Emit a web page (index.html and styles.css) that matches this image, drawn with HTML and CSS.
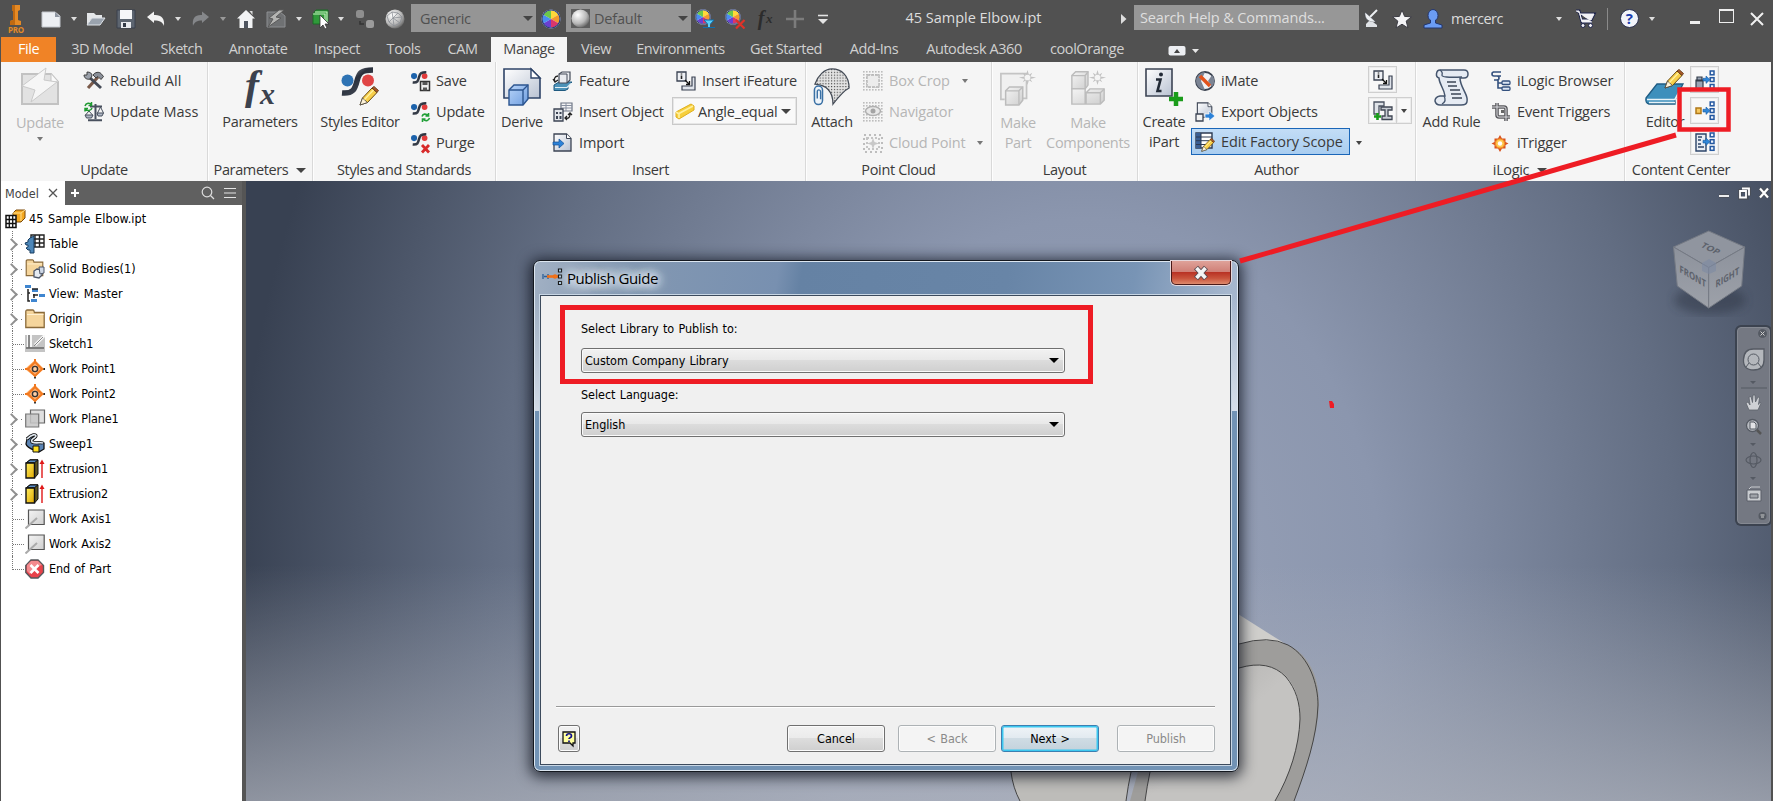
FILE: index.html
```html
<!DOCTYPE html>
<html lang="en">
<head>
<meta charset="utf-8">
<title>45 Sample Elbow.ipt</title>
<link rel="stylesheet" href="styles.css">
</head>
<body>
<svg class="defs" width="0" height="0">
  <defs>
    <linearGradient id="gS" x1="0" y1="0" x2="1" y2="1"><stop offset="0" stop-color="#9aa2ac"/><stop offset=".4" stop-color="#2a303c"/><stop offset="1" stop-color="#4a525e"/></linearGradient>
    <linearGradient id="gPage" x1="0" y1="0" x2="1" y2="1"><stop offset="0" stop-color="#fff"/><stop offset="1" stop-color="#b9c2d2"/></linearGradient>
    <linearGradient id="gGrey" x1="0" y1="0" x2="1" y2="1"><stop offset="0" stop-color="#f4f4f4"/><stop offset="1" stop-color="#cfcfcf"/></linearGradient>
    <linearGradient id="gYel" x1="0" y1="0" x2="1" y2="1"><stop offset="0" stop-color="#ffee60"/><stop offset="1" stop-color="#e0a800"/></linearGradient>
    <linearGradient id="gBlue" x1="0" y1="0" x2="1" y2="1"><stop offset="0" stop-color="#b8d4f8"/><stop offset="1" stop-color="#6f9ee0"/></linearGradient>
    <radialGradient id="gBall" cx=".35" cy=".3" r=".8"><stop offset="0" stop-color="#fff"/><stop offset=".6" stop-color="#b8b8b8"/><stop offset="1" stop-color="#555"/></radialGradient>
    <pattern id="pDots" width="3" height="3" patternUnits="userSpaceOnUse"><rect width="3" height="3" fill="#e4e4e4"/><rect x="1" y="1" width="1.2" height="1.2" fill="#444"/></pattern>
    <pattern id="pDotG" width="3" height="3" patternUnits="userSpaceOnUse"><rect width="1.6" height="1.6" fill="#bdbdbd"/></pattern>
  </defs>
  <symbol id="wheel" viewBox="0 0 20 20">
    <circle cx="10" cy="10" r="9.6" fill="#e8e8f4"/>
    <path d="M10 10V1.5A8.5 8.5 0 0 1 17.4 5.8z" fill="#ffd83a"/><path d="M10 10L17.4 5.8A8.5 8.5 0 0 1 17.4 14.2z" fill="#f39a2c"/><path d="M10 10L17.4 14.2A8.5 8.5 0 0 1 10 18.5z" fill="#d8376c"/><path d="M10 10V18.5A8.5 8.5 0 0 1 2.6 14.2z" fill="#6a3fd0"/><path d="M10 10L2.6 14.2A8.5 8.5 0 0 1 2.6 5.8z" fill="#4a8df0"/><path d="M10 10L2.6 5.8A8.5 8.5 0 0 1 10 1.5z" fill="#6cc84a"/>
    <circle cx="10" cy="10" r="9" fill="none" stroke="#2b3f78" stroke-width="1.2"/>
  </symbol>
  <symbol id="styleS" viewBox="0 0 20 20">
    <circle cx="3.6" cy="6" r="3.6" fill="#1c62ab"/><circle cx="16" cy="6" r="3.4" fill="#e23b3b"/>
    <path d="M2 13.5c6 .6 6.500-2 7.500-6.500S12 1.500 18 1.500" fill="none" stroke="url(#gS)" stroke-width="3"/>
  </symbol>
  <symbol id="pencil" viewBox="0 0 20 20">
    <path d="M1 19l2.500-7L13 2l5 4.500L8.500 16.500z" fill="#f8cf4a" stroke="#6a4a10" stroke-width="1"/><path d="M1 19l2.500-7 5 4.500z" fill="#fff3d8" stroke="#444" stroke-width=".8"/><path d="M13 2l2-1.600L19.500 4.500 18 6.500z" fill="#a85a28" stroke="#5a3010" stroke-width=".8"/><path d="M5.500 13.500L14.500 4" stroke="#fff2a0" stroke-width="1.300"/>
  </symbol>
  <symbol id="targets" viewBox="0 0 20 20">
    <g fill="#eef4fc" stroke="#2458a0" stroke-width="1.500"><rect x="15.200" y="1" width="3.800" height="3.800"/><rect x="15.200" y="7.700" width="3.800" height="3.800"/><rect x="15.200" y="14.500" width="3.800" height="3.800"/></g>
    <path d="M8 8.300h3V6l4 3.700-4 3.700v-2.400H8z" fill="#2f86d8" stroke="#1a5aa0" stroke-width=".6"/>
  </symbol>
  <symbol id="workpt" viewBox="0 0 20 20">
    <path d="M10 0v5M10 15v4.500M15 10h5" stroke="#222" stroke-width="1.800"/><path d="M0 10l10-9 9 9-9 8z" fill="#ffa75a"/><path d="M10 3l7 7-7 7-7-7z" fill="#ffb070" stroke="#f07820" stroke-width="1.800"/><path d="M0 10h3M10 0v3" stroke="#f07820" stroke-width="2"/><circle cx="10" cy="10" r="2.600" fill="#ffd0a8" stroke="#333" stroke-width="1.400"/>
  </symbol>
  <symbol id="folder" viewBox="0 0 20 20"><path d="M.8 18.500V2.500Q.8 1 2.300 1H8q1 0 1.400 2.500h9.800v15z" fill="#f5d59c" stroke="#8a6a3a" stroke-width="1.300"/><path d="M2 5.500h16.500" stroke="#fff0d0"/></symbol>
  <symbol id="extrude" viewBox="0 0 20 20"><path d="M1 4L5 .8h8V15l-3.500 4z" fill="#5c5420" stroke="#111"/><path d="M1 4h8.500v15H1z" fill="url(#gYel)" stroke="#111" stroke-width="1.400"/><path d="M1.500 3.600L5 1h8l-3.500 2.600z" fill="#5a8ec8" stroke="#111"/><path d="M17 19V3" stroke="#e01818" stroke-width="1.400"/><path d="M14.500 5L17 .5 19.500 5z" fill="#e01818"/></symbol>
  <symbol id="axis" viewBox="0 0 20 20"><path d="M3.500 1h15.700v14.500H3.500z" fill="url(#gGrey)" stroke="#555" stroke-width="1.200"/><path d="M.5 19.500L12 9" stroke="#aaa" stroke-width="2"/></symbol>
  <symbol id="page" viewBox="0 0 20 20"><path d="M1 1h12.500L18 5.500V18H1z" fill="url(#gPage)" stroke="#3c4454" stroke-width="1.300"/><path d="M13.500 1v4.500H18" fill="#fff" stroke="#3c4454"/></symbol>
  <symbol id="ifeat" viewBox="0 0 20 20"><path d="M1 1h9v9H1z" fill="#eef0f4" stroke="#3a4252" stroke-width="1.300"/><path d="M5.500 4.500V8M5.500 2.600v1" stroke="#222" stroke-width="1.600"/><path d="M16 6h3v13H6v-4h10z" fill="#dfe3ea" stroke="#3a4252" stroke-width="1.200"/><path d="M9 9l4.500 4.500M13.500 10v3.500H10" stroke="#111" stroke-width="1.300" fill="none"/></symbol>
</svg>

<div class="app">
  <header class="titlebar">
    <span class="slot"><svg width="18" height="30"><path d="M5 1h8v5l-2 1v9l3 1v4H3v-4l3-1V7L5 6z" fill="#e58a25"/><path d="M5 1h3v20H3v-4l3-1V7L5 6z" fill="#c06a12"/><text x="9" y="28.500" text-anchor="middle" class="pro">PRO</text></svg></span>
    <span class="slot"><svg width="20" height="18"><path d="M1 2h13l5 4v11H1z" fill="#eceff3" stroke="#c2c6cc"/><path d="M14 2v5h5" fill="#8c94a0"/></svg></span>
    <span class="slot"><i class="caret light"></i></span>
    <span class="slot"><svg width="20" height="16"><path d="M1 2h7l2 2h6v3H6L1 14z" fill="#e4e6e8"/><path d="M6 7h13l-5 7H1z" fill="#9aa3ae" stroke="#dfe3e8"/></svg></span>
    <span class="slot"><svg width="20" height="20"><path d="M1 1h18v18H1z" fill="#5d6570" stroke="#3b414c"/><path d="M4 1h12v9H4z" fill="#f6f6f8"/><path d="M5 13h10v6H5z" fill="#e8eaee"/><path d="M7 14h3v4H7z" fill="#333a46"/></svg></span>
    <span class="slot"><svg width="20" height="16"><path d="M1 6l7-5.500v3.500c7-.5 11 3 10 11-1.500-4-4-5.500-10-5.500V12z" fill="#f2f2f2"/></svg></span>
    <span class="slot"><i class="caret light"></i></span>
    <span class="slot"><svg width="20" height="16"><path d="M18 6l-7-5.500v3.500C4 3.500 1 7 2 15c1.500-4 4-5.500 9-5.500V12z" fill="#85878a"/></svg></span>
    <span class="slot"><i class="caret dim"></i></span>
    <span class="slot"><svg width="20" height="20"><path d="M10 1l9 8.500h-2.500V19H3.500V9.500H1z" fill="#f2f3f4"/><path d="M8 12h4v7H8z" fill="#4e545e"/><path d="M13.500 2h3v4z" fill="#ddd"/></svg></span>
    <span class="slot"><svg width="20" height="20"><path d="M1 3h13l5 4v11H1z" fill="#6f7173" stroke="#8d8f92"/><path d="M13 1L3 9l4 1-5 8 13-9-5-1 8-7z" fill="#b4b4b2" stroke="#5a5a5a"/></svg></span>
    <span class="slot"><i class="caret light"></i></span>
    <span class="slot"><svg width="20" height="22"><path d="M2 6l3-4h12v11l-3 3H2z" fill="#2f9a3a" stroke="#1d6a26"/><path d="M4 4h12v10M2 6h12v10" fill="none" stroke="#c4f0bc" stroke-width="1.200"/><path d="M9 7v13l3-3 2 4 2-1-2-4h4z" fill="#fff" stroke="#333" stroke-width=".8"/></svg></span>
    <span class="slot"><i class="caret light"></i></span>
    <span class="slot"><svg width="20" height="20"><rect x="1" y="1" width="8" height="8" rx="2.500" fill="#8e8e8e"/><rect x="11" y="11" width="8" height="8" rx="2.500" fill="#9b9b9b"/><path d="M5 12v3h4" stroke="#333" stroke-width="1.500" fill="none"/></svg></span>
    <span class="slot"><svg width="20" height="20"><circle cx="10" cy="10" r="9.500" fill="url(#gBall)"/><path d="M2 7l5-4 6 1 4 4-2 6-6 3-5-4zM7 3l1 6 7 5M13 4l-5 5-4 4M17 8l-9 1 1 8" fill="none" stroke="#8b8f96" stroke-width=".8"/></svg></span>
    <span class="combo"><span class="combo-text">Generic</span><i class="caret mid"></i></span>
    <span class="slot"><svg width="20" height="20"><use href="#wheel"/></svg></span>
    <span class="combo"><svg width="19" height="19"><rect width="19" height="19" fill="#5d5d5d"/><circle cx="9.500" cy="9.500" r="9" fill="url(#gBall)"/></svg><span class="combo-text">Default</span><i class="caret mid"></i></span>
    <span class="slot"><svg width="20" height="20"><use href="#wheel" width="16" height="16"/><path d="M9 11h10l-4 4.500h-2zM8 18.500h12" fill="#5cd0f8" stroke="#0e70b0"/><path d="M14 15v3" stroke="#5cd0f8" stroke-width="2"/></svg></span>
    <span class="slot"><svg width="20" height="20"><use href="#wheel" width="16" height="16"/><path d="M11 11l8.500 8.500M19.500 11L11 19.500" stroke="#e03228" stroke-width="2.200"/></svg></span>
    <span class="slot fx-small">f<sub>x</sub></span>
    <span class="slot"><svg width="18" height="18"><path d="M9 0v18M0 9h18" stroke="#7c7c7c" stroke-width="2.600"/></svg></span>
    <span class="slot"><svg width="12" height="12"><path d="M1 2.500h10" stroke="#e4e4e4" stroke-width="1.600"/><path d="M1 6h10l-5 5z" fill="#e4e4e4"/></svg></span>
    <span class="doc-title">45 Sample Elbow.ipt</span>
    <span class="slot"><svg width="6" height="10"><path d="M0 0l5.500 5L0 10z" fill="#ddd"/></svg></span>
    <span class="search">Search Help &amp; Commands...</span>
    <span class="slot"><svg width="18" height="20"><path d="M2 3c-1 7 4 11 11 10z" fill="#eceff2" stroke="#3c4048" stroke-width=".6"/><path d="M7 8l7-7" stroke="#eceff2" stroke-width="2"/><path d="M6 12l-3 3v3h11v-2l-4-3z" fill="#dfe2e6"/></svg></span>
    <span class="slot"><svg width="20" height="20"><path d="M10 1l2.600 6.400 6.900.4-5.300 4.300L16 19l-6-3.800L4 19l1.800-6.900L.5 7.800l6.900-.4z" fill="#f4f4f6" stroke="#3c3c44"/></svg></span>
    <span class="slot"><svg width="20" height="20"><ellipse cx="10" cy="6.500" rx="5" ry="6" fill="#6b9cf4" stroke="#23366e"/><path d="M7.500 11h5v3l6.500 2v3H1v-3l6.500-2z" fill="#6b9cf4" stroke="#23366e"/><path d="M8 10h4v5H8z" fill="#6b9cf4"/></svg></span>
    <span class="user-name">mercerc</span>
    <span class="slot"><i class="caret light"></i></span>
    <span class="slot"><svg width="20" height="20"><path d="M1 2h3l3 11h10M5 5h14l-3 6H6.500z" fill="#f2f2f6" stroke="#20264e" stroke-width="3"/><path d="M1 2h3l3 11h10M5 5h14l-3 6H6.500z" fill="#f2f2f6" stroke="#f2f2f6" stroke-width="1"/><circle cx="8" cy="16.500" r="2" fill="#f2f2f6" stroke="#20264e"/><circle cx="15.500" cy="16.500" r="2" fill="#f2f2f6" stroke="#20264e"/></svg></span>
    <span class="slot"><i class="vline"></i></span>
    <span class="slot"><i class="help-ball">?</i></span>
    <span class="slot"><i class="caret light"></i></span>
    <span></span>
    <span class="slot"><i class="win-min"></i></span>
    <span class="slot"><i class="win-max"></i></span>
    <span class="slot"><svg width="14" height="14"><path d="M1 1l12 12M13 1L1 13" stroke="#f0f0f0" stroke-width="2"/></svg></span>
  </header>

  <nav class="tabs">
    <span class="tab tab-file">File</span><span class="tab w92">3D Model</span><span class="tab w68">Sketch</span><span class="tab w86">Annotate</span><span class="tab w72">Inspect</span><span class="tab w61">Tools</span><span class="tab w56">CAM</span><span class="tab tab-on">Manage</span><span class="tab w58">View</span><span class="tab w112">Environments</span><span class="tab w100">Get Started</span><span class="tab w77">Add-Ins</span><span class="tab w124">Autodesk A360</span><span class="tab w103">coolOrange</span>
    <svg class="tab-fold" width="34" height="12"><rect x=".5" y="1" width="17" height="9.500" rx="2" fill="#eceef2"/><path d="M6 8l3-4 3 4z" fill="#444"/><path d="M24 4h7l-3.500 4z" fill="#e8e8e8"/></svg>
  </nav>

  <section class="ribbon">
    <div class="panel p-update">
      <div class="body">
        <div class="big off"><svg width="38" height="38" viewBox="0 0 38 38"><path d="M1 6h29l7 8v22H1z" fill="#e2e2e2" stroke="#c2c2c2" stroke-width="2"/><path d="M30 6v8h7" fill="#fafafa" stroke="#c2c2c2"/><path d="M25 0L1 18l13 4-4 12 26-20-13-2z" fill="#f6f6f6" stroke="#cacaca"/></svg><span>Update</span><i class="caret grey"></i></div>
        <div class="col">
          <div class="row"><svg width="20" height="20" viewBox="0 0 20 20"><path d="M4 17L14 6" stroke="#7a5a4a" stroke-width="3.200"/><path d="M5 6l12 11" stroke="#454b56" stroke-width="3"/><path d="M9 4c2-3 6-3.500 8-1.500l2.500 3-2.500 3-3-3-2 1.500z" fill="#8a8f98" stroke="#333" stroke-width=".9"/><path d="M3 1v3H0c0 3 3 5 6 4l2-3c0-3-2-4-5-4z" fill="#9aa0aa" stroke="#333" stroke-width=".9"/></svg><span>Rebuild All</span></div>
          <div class="row"><svg width="20" height="20" viewBox="0 0 20 20"><path d="M11.500 2v15M4 18.300h14M6 4.500h12" stroke="#48505e" stroke-width="2"/><path d="M1 13h8l-1.500 3h-5zM13 11h6.500l-1.500 3h-4z" fill="#aeb6c4" stroke="#48505e"/><path d="M16.500 5l-3 6M16.500 5l3 6M5 9l-3.500 4M5 9l3.500 4" stroke="#48505e"/><path d="M1 4c1-3.500 5-3.500 6-1.500M7.500 0v3.500h-3M8 6c-1 3-5 3.500-6.500 1M1 9.500V6.500h3" fill="none" stroke="#1f9a32" stroke-width="1.500"/></svg><span>Update Mass</span></div>
        </div>
      </div>
      <div class="cap">Update</div>
    </div>
    <div class="panel p-param">
      <div class="body"><div class="big"><span class="fx-big">f<sub>x</sub></span><span>Parameters</span></div></div>
      <div class="cap">Parameters<i class="caret mid"></i></div>
    </div>
    <div class="panel p-styles">
      <div class="body">
        <div class="big"><svg width="38" height="38" viewBox="0 0 38 38"><circle cx="6.500" cy="12.500" r="6" fill="#2e73b4"/><circle cx="27" cy="12.500" r="6" fill="#e04545"/><path d="M1 25c11 1 13-4 15-12S20 2 32 2" fill="none" stroke="url(#gS)" stroke-width="5.500"/><use href="#pencil" x="18" y="18" width="20" height="20"/></svg><span>Styles Editor</span></div>
        <div class="col">
          <div class="row"><svg width="20" height="20"><use href="#styleS" width="19" height="17"/><path d="M10.500 10.500h9v9h-9z" fill="#eee" stroke="#333" stroke-width="1.500"/><path d="M12.500 11h5v3h-5zM13 16.500h4v3h-4z" fill="#555"/></svg><span>Save</span></div>
          <div class="row"><svg width="20" height="20"><use href="#styleS" width="19" height="17"/><path d="M12 14.500c1-3 4-3 6-1M18.500 11v3h-3M19.500 16c-1 3-4 3.500-6 1.500M12.500 20v-3h3" fill="none" stroke="#22a038" stroke-width="1.600"/></svg><span>Update</span></div>
          <div class="row"><svg width="20" height="20"><use href="#styleS" width="19" height="17"/><path d="M12 12l7 7.500M19 12l-7 7.500" stroke="#d82a2a" stroke-width="2.800"/></svg><span>Purge</span></div>
        </div>
      </div>
      <div class="cap">Styles and Standards</div>
    </div>
    <div class="panel p-insert">
      <div class="body">
        <div class="big"><svg width="38" height="38" viewBox="0 0 38 38"><path d="M1 1h27l9 9v20H1z" fill="url(#gPage)" stroke="#2f4468" stroke-width="1.600"/><path d="M28 1v9h9z" fill="#fff" stroke="#2f4468" stroke-width="1.400"/><path d="M6 22l5-5h14v14l-5 6H6z" fill="url(#gBlue)" stroke="#2c5590" stroke-width="1.400"/><path d="M6 22h14v15M20 22l5-5" fill="none" stroke="#2c5590" stroke-width="1.400"/></svg><span>Derive</span></div>
        <div class="col c-insert">
          <div class="row"><svg width="20" height="20" viewBox="0 0 20 20"><path d="M1 14l5-3h13l-4 4v3l-3 1.500H1z" fill="#4c92b8" stroke="#1f5a80"/><path d="M2 16.500h12l4-4" fill="none" stroke="#e4f0f6" stroke-width="1.200"/><path d="M6 3l3-2h8v8l-3 3H6z" fill="#e9ebef" stroke="#444b58" stroke-width="1.200"/><path d="M6 3h8v9" fill="none" stroke="#444b58"/><path d="M5 5c-4 0-4 4-3 5M0 8l2 3 3-2" fill="none" stroke="#222" stroke-width="1.300"/></svg><span>Feature</span></div>
          <div class="row"><svg width="20" height="20" viewBox="0 0 20 20"><path d="M8 1h11v8H8z" fill="#f4f4f6" stroke="#6d7584" stroke-width="1.200"/><path d="M8 3.500h11M13 1v8M8 6h11" stroke="#8890a0"/><path d="M1 7h9v12H1z" fill="#e3e6ea" stroke="#3c4454" stroke-width="1.300"/><path d="M3 10h2v2H3zM6.500 10h2v2h-2zM3 14h2v3H3zM6.500 14h2v3h-2z" fill="#3c4454"/><path d="M12 16c4 1 5-1 5-4M14 14l-2 2 2 2M15 13l2-2 2 2" fill="none" stroke="#222" stroke-width="1.300"/></svg><span>Insert Object</span></div>
          <div class="row"><svg width="20" height="20"><use href="#page" width="20" height="20"/><path d="M0 9h6V6l5 4.500L6 15v-3H0z" fill="#2c82d8" stroke="#145096" stroke-width=".7"/></svg><span>Import</span></div>
        </div>
        <div class="col">
          <div class="row inset"><svg width="20" height="20"><use href="#ifeat"/></svg><span>Insert iFeature</span></div>
          <div class="pick"><svg width="20" height="18" viewBox="0 0 20 18"><path d="M1 10L16 2l3 2v4L4 17l-3-2z" fill="#f6cf3c" stroke="#e0b020"/><path d="M3 12L18 4M1 10l3 2v4" stroke="#fff0a0" stroke-width="1.600" fill="none"/></svg><span>Angle_equal</span><i class="caret mid"></i></div>
        </div>
      </div>
      <div class="cap">Insert</div>
    </div>
    <div class="panel p-cloud">
      <div class="body">
        <div class="big"><svg width="40" height="40" viewBox="0 0 40 40"><path d="M2 17C5 8 12 1 20 1c10 0 18 7 18 20-6 3-10 8-17 17 0-12-6-20-19-21z" fill="url(#pDots)" stroke="#444b56" stroke-width="1.300"/><rect x="1.500" y="19" width="8.500" height="19.500" rx="4.200" fill="#eef4fa" stroke="#3a70a4" stroke-width="1.600"/><path d="M4.500 32V25q0-2 1.700-2T8 25v8" fill="none" stroke="#3a70a4" stroke-width="1.500"/></svg><span>Attach</span></div>
        <div class="col off">
          <div class="row"><svg width="20" height="20"><rect width="20" height="20" fill="url(#pDotG)"/><path d="M4 4h12v12H4z" fill="#ececec" stroke="#b4b4b4" stroke-width="1.300" stroke-dasharray="3 1"/></svg><span>Box Crop</span><i class="caret cc"></i></div>
          <div class="row"><svg width="20" height="20"><rect width="20" height="20" fill="url(#pDotG)"/><ellipse cx="10" cy="9" rx="7.500" ry="4.500" fill="#e8e8e8" stroke="#b0b0b0" stroke-width="1.500"/><circle cx="10" cy="9" r="2.500" fill="#a4a4a4"/></svg><span>Navigator</span></div>
          <div class="row"><svg width="20" height="20"><path d="M1 2h18v17H1z" fill="none" stroke="#bdbdbd" stroke-width="2" stroke-dasharray="2 3"/><path d="M4 5h12v11H4z" fill="none" stroke="#c4c4c4" stroke-width="2" stroke-dasharray="2 2"/><path d="M10 5l1.500 4L16 10.500 11.500 12 10 16l-1.500-4L4 10.500 8.500 9z" fill="#c8c8c8"/></svg><span>Cloud Point</span><i class="caret cc"></i></div>
        </div>
      </div>
      <div class="cap">Point Cloud</div>
    </div>
    <div class="panel p-layout">
      <div class="body">
        <div class="big off"><svg width="38" height="40" viewBox="0 0 38 40"><path d="M5 33H1V6h27v26h-5" fill="#f0f0f0" stroke="#c4c4c4" stroke-width="1.800"/><path d="M6 24l4-4h14v14l-4 5H6z" fill="url(#gGrey)" stroke="#bcbcbc" stroke-width="1.600"/><path d="M6 24h14v14M20 24l4-4" fill="none" stroke="#bcbcbc" stroke-width="1.400"/><path d="M29 2l1.500 5L34 5l-2 4 6 1-6 1.500 2 3.500-3.500-2L29 18l-1.500-5L24 15l2-3.500L20 10l6-1-2-4 3.500 2z" fill="#c2c2c2"/><circle cx="29" cy="10" r="3" fill="#f4f4f4"/></svg><span>Make<br>Part</span></div>
        <div class="big off b-comp"><svg width="38" height="40" viewBox="0 0 38 40"><g fill="url(#gGrey)" stroke="#bcbcbc" stroke-width="1.500"><path d="M2 8l4-4h13v14l-3 4H2z"/><path d="M2 22h14v16H2zM17 26l4-4h15v12l-4 4H17z"/><path d="M2 8h14v14M16 8l3-4M17 26h15v12M32 26l4-4" fill="none"/></g><path d="M29 2l1.500 5L34 5l-2 4 6 1-6 1.500 2 3.500-3.500-2L29 18l-1.500-5L24 15l2-3.500L20 10l6-1-2-4 3.500 2z" fill="#c2c2c2"/><circle cx="29" cy="10" r="3" fill="#f4f4f4"/></svg><span>Make<br>Components</span></div>
      </div>
      <div class="cap">Layout</div>
    </div>
    <div class="panel p-author">
      <div class="body">
        <div class="big"><svg width="38" height="38" viewBox="0 0 38 38"><path d="M1 1h26v27H1z" fill="url(#gPage)" stroke="#3c4454" stroke-width="1.600"/><path d="M11 11.500h4.500l-3 11.500h4" fill="none" stroke="#222a36" stroke-width="2.600"/><circle cx="16" cy="6.500" r="2" fill="#222a36"/><path d="M31 24v14M24 31h14" stroke="#1a9c1a" stroke-width="4.500"/></svg><span>Create<br>iPart</span></div>
        <div class="col c-author">
          <div class="row"><svg width="20" height="20"><circle cx="10" cy="10" r="9" fill="#f0f2f6" stroke="#39414f" stroke-width="1.800"/><path d="M10 1a9 9 0 0 0 0 18L6 10zM17 4a9 9 0 0 1 0 12l-4-6z" fill="#7b8494"/><path d="M5 5l10 10" stroke="#e2521c" stroke-width="3.600"/></svg><span>iMate</span></div>
          <div class="row"><svg width="20" height="20"><use href="#page" width="20" height="17"/><path d="M1 12h7v7H1z" fill="#f2f2f2" stroke="#3c4454" stroke-width="1.300"/><path d="M10 12h4v-3l6 5-6 5v-3h-4z" fill="#2c82d8" stroke="#fff" stroke-width=".7"/></svg><span>Export Objects</span></div>
          <div class="row"><div class="scope"><svg width="20" height="20"><path d="M1 1h16v15H1z" fill="#fff" stroke="#2c3a52" stroke-width="1.400"/><path d="M1 1h5v15H1z" fill="#3b5f94"/><path d="M1 5h16M1 8.700h16M1 12.500h16M6 1v15" stroke="#2c3a52"/><use href="#pencil" x="6" y="6" width="14" height="14"/></svg><span>Edit Factory Scope</span></div><i class="caret"></i></div>
        </div>
        <div class="col">
          <div class="boxes"><div class="box"><svg width="20" height="20"><use href="#ifeat"/></svg></div>
          <div class="split"><div class="box"><svg width="20" height="20"><path d="M1 1h10v4H6v8H1z" fill="#dfe3e8" stroke="#4a5260" stroke-width="1.300"/><path d="M8 6h11v3h-4v6h4v3.500H9V15h3V9H8z" fill="#c8cdd4" stroke="#3f4653" stroke-width="1.300"/><path d="M4.500 12v7M1 15.500h7" stroke="#1a9c1a" stroke-width="2.600"/></svg></div><div class="box drop"><i class="caret"></i></div></div></div>
        </div>
      </div>
      <div class="cap">Author</div>
    </div>
    <div class="panel p-ilogic">
      <div class="body">
        <div class="big b-rule"><svg width="36" height="38" viewBox="0 0 36 38"><path d="M6 2h24q4 0 4 4t-4 4h-4c0 8 6 14 7 20 1 7-3 7-6 7H6q-4 0-5-4 0-4 5-5h5C10 20 5 16 5 10 1 9 2 2 6 2z" fill="#e6ebf3" stroke="#46566e" stroke-width="1.500"/><path d="M6 2q3 2 2 5t20 2M10 28q3 5-2 8" fill="none" stroke="#46566e" stroke-width="1.300"/><path d="M13 14h9M14 18h9M16 22h10M17 26h10M18 30h10" stroke="#3b4656" stroke-width="1.500"/></svg><span>Add Rule</span></div>
        <div class="col">
          <div class="row"><svg width="20" height="20"><path d="M7 1H3q-2 0-2 2t2 2h3q2 0 2 2t-2 2H3M2 1h8M5 5h5M7 9v8h4M7 12h4" fill="none" stroke="#33507e" stroke-width="1.600"/><rect x="11" y="10" width="8" height="3.500" rx="1" fill="#dde6f4" stroke="#33507e" stroke-width="1.300"/><rect x="11" y="16" width="8" height="3.300" rx="1" fill="#dde6f4" stroke="#33507e" stroke-width="1.300"/></svg><span>iLogic Browser</span></div>
          <div class="row"><svg width="20" height="20"><path d="M6 1v12q0 2 2 2h11M1 5h12q2 0 2 2v12" fill="none" stroke="#5a5a5e" stroke-width="3.600"/><path d="M6 1v12q0 2 2 2h11M1 5h12q2 0 2 2v12" fill="none" stroke="#dcdce0" stroke-width="1"/><path d="M10 8h3v3h-3z" fill="#666"/></svg><span>Event Triggers</span></div>
          <div class="row"><svg width="20" height="20" viewBox="0 0 20 20"><path d="M9 2l2 3.500h3.500V9l3 1.500-3 1.500v3.500H11L9 19l-2-3.500H3.500V12l-3-1.500 3-1.500V5.500H7z" fill="#d8501c"/><circle cx="9" cy="10.500" r="4.600" fill="#ffc850" stroke="#f08a28" stroke-width="1.300"/><circle cx="9" cy="10.500" r="2.200" fill="#fff"/></svg><span>iTrigger</span></div>
        </div>
      </div>
      <div class="cap">iLogic<i class="caret mid"></i></div>
    </div>
    <div class="panel p-content">
      <div class="body">
        <div class="big b-edit"><svg width="40" height="38" viewBox="0 0 40 38"><path d="M1 30L12 16h26l-8 16v4H4q-4-1-3-6z" fill="#3d8fbc" stroke="#1f5c84" stroke-width="1.300"/><path d="M2 31.500h28l6-11M4 34.500h26" fill="none" stroke="#e8f2f8" stroke-width="1.700"/><use href="#pencil" x="19" y="1" width="20" height="20"/></svg><span>Editor</span></div>
        <div class="boxes tall">
          <div class="box"><svg width="20" height="20"><path d="M1 10h7v9H1zM2 7h5v4H2z" fill="#9aa4b4" stroke="#333c4a" stroke-width="1.200"/><use href="#targets"/></svg></div>
          <div class="box"><svg width="20" height="20"><path d="M1 7h5v5.500H1z" fill="#f6c860" stroke="#b07818" stroke-width="1.500"/><use href="#targets"/></svg></div>
          <div class="box"><svg width="20" height="20"><path d="M1 2h10v17H1z" fill="#e8edf4" stroke="#2c4468" stroke-width="1.400"/><path d="M3 5h4M3 8h3M3 12h3M3 15h6" stroke="#2c4468" stroke-width="1.300"/><use href="#targets"/></svg></div>
        </div>
      </div>
      <div class="cap">Content Center</div>
    </div>
  </section>

  <main class="work">
    <aside class="browser">
      <div class="bhead"><span class="btab">Model<svg width="10" height="10"><path d="M1 1l8 8M9 1L1 9" stroke="#555" stroke-width="1.300"/></svg></span><svg width="10" height="10"><path d="M5 1v8M1 5h8" stroke="#fff" stroke-width="2"/></svg><span class="grow"></span><svg width="14" height="14"><circle cx="6" cy="6" r="4.800" fill="none" stroke="#ddd" stroke-width="1.200"/><path d="M9.500 9.500l3.500 3.500" stroke="#ddd" stroke-width="1.200"/></svg><svg width="12" height="12"><path d="M0 1.500h12M0 6h12M0 10.500h12" stroke="#e4e4e4" stroke-width="1.200"/></svg></div>
      <div class="root"><svg width="20" height="20"><path d="M8 4l3-3h9v8l-4 4H8z" fill="#f4a820" stroke="#7a4808"/><path d="M8 4h8v8M16 4l4-3" fill="none" stroke="#ffe090"/><path d="M1 6.500h10v12H1z" fill="#fff" stroke="#111" stroke-width="1.500"/><path d="M1 10.500h10M1 14.500h10M4.300 6v12M7.700 6v12" stroke="#111" stroke-width="1.300"/></svg>45 Sample Elbow.ipt</div>
      <ul class="tree">
        <li class="kids"><svg width="20" height="20"><path d="M6 1h13v12H6z" fill="#fff" stroke="#222" stroke-width="1.400"/><path d="M6 5h13M6 9h13M10 1v12M14.500 1v12" stroke="#222" stroke-width="1.400"/><path d="M9 2v17H5v-3H3l-2-2 2-1v-2H1l-1-2 3-1V6l2-2z" fill="#4c86b8" stroke="#163c60"/></svg>Table</li>
        <li class="kids"><svg width="20" height="20"><use href="#folder" width="19" height="18"/><path d="M9 12l3-2 5 1v5l-3 3-5-1z" fill="#e6ebf2" stroke="#4c5668" stroke-width="1.300"/><path d="M14 8h5v6l-4 1z" fill="#cfd8e6" stroke="#4c5668"/></svg>Solid Bodies(1)</li>
        <li class="kids"><svg width="20" height="20"><path d="M0 1h6v3H0zM7 5h6v3H7zM14 10h6v3h-6zM6 15h6v3H6z" fill="#3f86d0"/><path d="M3 5v12h2M3 9h2M9 10v4M8 11h5M7 5h6" stroke="#222" stroke-width="1.500" fill="none"/></svg>View: Master</li>
        <li class="kids"><svg width="20" height="20"><use href="#folder"/></svg>Origin</li>
        <li><svg width="20" height="20"><path d="M0 1h20v17H0z" fill="#c4c4c4"/><path d="M2 1h5v12H2zM9 10l9-9h2v2l-9 9z" fill="#f8f8f8"/><path d="M4 1v13h15M1 14h4" stroke="#666" stroke-width="1.500" fill="none"/><path d="M9 12L18 3" stroke="#888"/></svg>Sketch1</li>
        <li><svg width="20" height="20"><use href="#workpt"/></svg>Work Point1</li>
        <li><svg width="20" height="20"><use href="#workpt"/></svg>Work Point2</li>
        <li class="kids"><svg width="20" height="20"><path d="M5.500 1h14v13h-14z" fill="#e0e0e0" stroke="#666" stroke-width="1.200"/><path d="M.7 5h13v13H.7z" fill="#c6c6c6" fill-opacity=".85" stroke="#777" stroke-width="1.200"/></svg>Work Plane1</li>
        <li class="kids"><svg width="20" height="20"><path d="M2 5c5-5 9-5 9-3S6 6 8 8s8-1 11 1v6l-5 3c-3-2-12-3-13-8z" fill="#5b84b4" stroke="#111" stroke-width="1.300"/><path d="M2 5c5-5 9-5 9-3S5 5 7 8c4 2 8 0 11 1" fill="none" stroke="#111" stroke-width="3.200"/><path d="M2 5c5-5 9-5 9-3S5 5 7 8c4 2 8 0 11 1" fill="none" stroke="#e0e8f0" stroke-width="1.600"/><path d="M8 12h6v6H8z" fill="#ffe020" stroke="#111"/></svg>Sweep1</li>
        <li class="kids"><svg width="20" height="20"><use href="#extrude"/></svg>Extrusion1</li>
        <li class="kids"><svg width="20" height="20"><use href="#extrude"/></svg>Extrusion2</li>
        <li><svg width="20" height="20"><use href="#axis"/></svg>Work Axis1</li>
        <li><svg width="20" height="20"><use href="#axis"/></svg>Work Axis2</li>
        <li class="last"><svg width="20" height="20"><path d="M6 1h7l5.500 5.500v7L13 19H6L.8 13.500v-7z" fill="#e8424a" stroke="#54585c" stroke-width="1.400"/><path d="M6 2h7l4 4c-5 1-9 4-12 9l-3-3V6z" fill="#f48a8e"/><path d="M5.500 6l8 8M13.500 6l-8 8" stroke="#fff" stroke-width="2.600"/></svg>End of Part</li>
      </ul>
    </aside>

    <div class="viewport">
      <svg class="scene" width="1525" height="620" viewBox="246 181 1525 620">
        <defs>
          <linearGradient id="bore" x1="0" y1="0" x2="1" y2="1"><stop offset="0" stop-color="#a9a8a6"/><stop offset=".5" stop-color="#c4c3c1"/></linearGradient>
          <linearGradient id="cube" x1="0" y1="0" x2="0" y2="1"><stop offset="0" stop-color="#8d929c"/><stop offset="1" stop-color="#9da1a9"/></linearGradient>
          <filter id="soft"><feGaussianBlur stdDeviation="5"/></filter>
        </defs>
        <path d="M1200 590L1284 643 1240 660H1200z" fill="#cfcecb"/>
        <path d="M1011 772q2 16 9 29h110l30-110 80-47q34-10 58 7c26 22 24 60 14 95-5 20-11 37-18 55H1020l-9-50z" fill="#9e9d9b"/>
        <path d="M1011 740v32q2 16 9 29h106q2-14 5-29v-32z" fill="#bdbcb9"/>
        <path d="M1150 772q-3 14-5 29h130c16-28 25-60 25-84 0-30-15-52-43-52-40 3-95 40-107 107z" fill="url(#bore)"/>
        <path d="M1011 772q2 16 9 29M1131 772q-3 14-5 29M1150 772q-3 14-5 29M1239 644q30-9 49 1c22 12 30 40 30 60-1 32-12 64-24 96M1239 668q30-9 47 9c10 12 14 26 14 42-1 28-10 56-25 82" fill="none" stroke="#454545"/>
        <ellipse cx="1710" cy="300" rx="36" ry="14" fill="#2b3140" opacity=".45" filter="url(#soft)"/>
        <g stroke="#757a84"><path d="M1708.700 231l36 16-36 20.500-35.200-20.500z" fill="#90959f"/><path d="M1673.500 247l35.200 20.500V308l-31.400-22z" fill="url(#cube)"/><path d="M1744.700 247l-36 20.500V308l33-22z" fill="url(#cube)"/></g>
        <path d="M1702 263l7-4 7 4v8l-7 3-7-3z" fill="#7d8aa4" opacity=".6"/>
        <g class="cube-text"><text transform="matrix(.85 .42 -.6 .6 1700 246.500)">TOP</text><text transform="matrix(.78 .46 0 1 1679.500 272)">FRONT</text><text transform="matrix(.78 -.46 0 1 1715.500 288)">RIGHT</text></g>
      </svg>
      <svg class="mdi" width="54" height="12"><g stroke="#4a4e56" stroke-width="3.500" fill="none"><path d="M1 9h10"/><path d="M22 4h7v7h-7zM24 1.500h7v7"/><path d="M42 1.500l8 9M50 1.500l-8 9"/></g><g stroke="#fff" stroke-width="1.800" fill="none"><path d="M1 9h10"/><path d="M22 4h6v6.500h-6zM24 1.500h7v7"/><path d="M42 1.500l8 9M50 1.500l-8 9" stroke-width="2.200"/></g></svg>
      <div class="navbar">
        <svg width="32" height="196" viewBox="0 0 32 196"><g fill="none" stroke="#555a63"><circle cx="24.500" cy="6.500" r="4" fill="#555a63"/><path d="M22.500 4.500l4 4M26.500 4.500l-4 4" stroke="#ccc"/><path d="M15.500 22H26v11q0 10-10.500 10T5.500 32.500 15.500 22z" fill="#b4b7bc" stroke-width="1.300"/><circle cx="15.500" cy="32.500" r="5.500"/><path d="M8 40l3-4M23 40l-3-4M3 61h26"/></g>
        <path d="M12 54h6l-3 3zM12 116h6l-3 3zM12 150h6l-3 3z" fill="#555a63"/>
        <path d="M11 83L8 76l2-1 2 3-1-8 2-.5 1.500 6L15 68h2l.5 7L20 70l1.500.5-1 7L22 75l1 1-3 7z" fill="#cfd1d5" stroke="#5d626b" stroke-width=".8"/>
        <circle cx="14.500" cy="98.500" r="6" fill="#b9bcc2" stroke="#555a63" stroke-width="1.300"/><path d="M12 95h4l2 2v5h-6z" fill="#e2e3e6" stroke="#555a63"/><path d="M19 103l4 4" stroke="#555" stroke-width="2.500"/>
        <g fill="none" stroke="#555a63" stroke-width="1.200"><ellipse cx="15.500" cy="133" rx="7.500" ry="4"/><ellipse cx="15.500" cy="133" rx="3.500" ry="7.500"/></g>
        <path d="M9 163h14v11H9z" fill="#c9ccd0" stroke="#5a5f68"/><path d="M12 167h8v4h-8z" fill="#9fa3a9" stroke="#5a5f68"/><path d="M11 162l2-2h9" stroke="#c9ccd0" fill="none"/><circle cx="24.500" cy="189" r="4" fill="#555a63"/><path d="M22.500 188h4M23 190h3" stroke="#ccc"/></svg>
      </div>

      <div class="dialog">
        <div class="dbar"><svg width="20" height="18"><path d="M1 6v5M6 6v5M2 8.500h4" stroke="#2c5f98" stroke-width="1.300"/><path d="M5 8.500h11" stroke="#f07018" stroke-width="2.600"/><circle cx="13" cy="8.500" r="2.200" fill="#f07018"/><g fill="#bcdcf8" stroke="#111" stroke-width="1.200"><path d="M16.500 1h3v3h-3zM16.500 7h3v3h-3zM16.500 13.500h3v3h-3z"/></g></svg><span class="dtitle">Publish Guide</span><span class="dclose"><svg width="16" height="14" viewBox="0 0 16 14"><path d="M3 1.500l10 11M13 1.500L3 12.500" stroke="#5a4a50" stroke-width="5.500"/><path d="M3.500 2l9 10M12.500 2l-9 10" stroke="#f4f4f4" stroke-width="3.600"/></svg></span></div>
        <div class="client">
          <div class="form">
            <label>Select Library to Publish to:</label>
            <div class="select">Custom Company Library<i class="caret black"></i></div>
            <label class="second">Select Language:</label>
            <div class="select">English<i class="caret black"></i></div>
          </div>
          <div class="foot">
            <span class="btn help"><svg width="14" height="16"><path d="M1 1h12v11h-2v3l-3-3H1z" fill="#ffffa0" stroke="#111" stroke-width="1.300"/><path d="M4.500 5c0-3 5-3 5 0 0 2-2.500 1.500-2.500 3M7 9.500v1.500" stroke="#10108c" stroke-width="1.700" fill="none"/></svg></span>
            <span class="grow"></span>
            <span class="btn">Cancel</span><span class="btn off-btn back">&lt; Back</span><span class="btn next">Next &gt;</span><span class="btn off-btn pub">Publish</span>
          </div>
        </div>
      </div>
    </div>
  </main>

  <svg class="marks" width="1773" height="801" fill="none" stroke="#ee1c24">
    <rect x="1679.500" y="89.500" width="49" height="40" stroke-width="4.500"/>
    <rect x="562.500" y="307.500" width="528" height="74" stroke-width="5"/>
    <path d="M1676 135L1240 261" stroke-width="5"/>
    <path d="M1329 401h3l2 3v4h-4z" fill="#ee1c24" stroke="none"/>
  </svg>
</div>
</body>
</html>
```
FILE: styles.css
```css
* { box-sizing: border-box; }
body { margin: 0; width: 1773px; height: 801px; overflow: hidden; background: #515151; font-family: "Open Sans", "Noto Sans", sans-serif; font-size: 14.5px; letter-spacing: -0.42px; color: #3a3a3a; }
svg { display: block; flex: none; overflow: visible; }
.defs { position: absolute; }
.app { position: relative; width: 1773px; height: 801px; padding: 0 2px 0 1px; display: flex; flex-direction: column; }
.grow { flex: 1; }

.caret { display: block; flex: none; width: 0; height: 0; border: 3.5px solid transparent; border-top: 4px solid #444; border-bottom: 0; }
.caret.light { border-top-color: #ddd; }
.caret.dim { border-top-color: #999; }
.caret.grey { border-top-color: #777; }
.caret.mid { border-width: 5px 5px 0; border-top-color: #444; }
.caret.black { border-width: 5px 5px 0; border-top-color: #000; }

.titlebar { height: 37px; margin-left: -1px; display: grid; grid-template-columns: 32px 38px 8px 36px 24px 36px 8px 37px 8px 38px 22px 24px 20px 20px 28px 32px 125px 30px 125px 28px 32px 28px 32px 23px 280px 20px 225px 26px 34px 28px 104px 16px 36px 8px 36px 10px 23px 30px 32px 29px; align-items: center; color: #dcdcdc; }
.slot { display: flex; align-items: center; justify-content: center; height: 36px; }
.pro { font: bold 8px "Open Sans", sans-serif; fill: #e58a25; letter-spacing: -0.2px; }
.combo { height: 28px; background: #959595; color: #505050; display: flex; align-items: center; padding: 0 3px 0 5px; margin-bottom: 1px; letter-spacing: -0.2px; }
.combo-text { flex: 1; padding-left: 4px; }
.fx-small { font-family: "Liberation Serif", serif; font-style: italic; font-weight: bold; font-size: 20px; color: #2c2c2c; }
.fx-small sub { font-size: 13px; vertical-align: -3px; padding-left: 2px; }
.doc-title { text-align: center; color: #dedede; letter-spacing: -0.02px; margin-top: -2px; padding-right: 1px; }
.search { height: 25px; margin-bottom: 2px; line-height: 25px; background: #979797; color: #dfdfdf; padding-left: 6px; letter-spacing: -0.13px; }
.user-name { padding-left: 4px; letter-spacing: -0.5px; }
.vline { width: 1px; height: 22px; background: #8a8a8a; }
.help-ball { width: 19px; height: 19px; border-radius: 50%; background: #f2f4fa; border: 1px solid #2a3050; color: #1c3fae; font: bold 15px/17px "Open Sans", sans-serif; text-align: center; }
.win-min { width: 10px; height: 3px; background: #eee; margin-top: 7px; }
.win-max { width: 15px; height: 14px; border: 1px solid #eee; border-top-width: 2px; margin-bottom: 5px; }

.tabs { height: 25px; display: flex; color: #d0d0d0; letter-spacing: -0.44px; }
.tab { text-align: center; line-height: 24px; flex: none; white-space: nowrap; }
.tab-file { width: 55px; background: #f08326; color: #fff; }
.tab-on { width: 76px; background: #f5f5f5; color: #444; }
.w92 { width: 92px; } .w68 { width: 67px; } .w86 { width: 86px; } .w72 { width: 72px; } .w61 { width: 61px; } .w56 { width: 57px; } .w58 { width: 58px; } .w112 { width: 111px; } .w100 { width: 100px; } .w77 { width: 76px; } .w124 { width: 124px; } .w103 { width: 102px; }
.tab-fold { margin: 8px 0 0 30px; }

.ribbon { height: 119px; background: #f5f5f5; display: flex; }
.panel { display: flex; flex-direction: column; flex: none; border-right: 1px solid #d9d9d9; box-shadow: 1px 0 #fdfdfd; }
.p-update { width: 207px; } .p-param { width: 105px; } .p-styles { width: 183px; } .p-insert { width: 310px; } .p-cloud { width: 186px; } .p-layout { width: 146px; } .p-author { width: 278px; } .p-ilogic { width: 209px; } .p-content { width: 146px; border: 0; box-shadow: none; }
.body { height: 98px; display: flex; align-items: flex-start; }
.cap { height: 20px; line-height: 20px; display: flex; justify-content: center; align-items: center; gap: 8px; white-space: nowrap; letter-spacing: -0.36px; }
.p-content .cap { padding-right: 34px; }
.big { flex: none; width: 52px; padding-top: 6px; display: flex; flex-direction: column; align-items: center; text-align: center; line-height: 20px; white-space: nowrap; letter-spacing: -0.3px; }
.big svg { height: 38px; }
.big > span:not(.fx-big) { margin-top: 6px; }
.big.off > span { margin-top: 7px; }
.big .caret { margin-top: 4px; }
.off { color: #b6b6b6; }
.p-update .big { width: 78px; } .p-param .big { width: 104px; } .p-styles .big { width: 94px; } .b-comp.big { width: 88px; } .b-rule.big { width: 71px; } .b-edit.big { width: 50px; margin-left: 15px; }
.p-ilogic .col.col { margin-left: 4px; }
.fx-big { height: 38px; font-family: "Liberation Serif", serif; font-style: italic; font-weight: bold; font-size: 42px; line-height: 34px; color: #3c424e; letter-spacing: 0; }
.fx-big sub { font-size: 30px; vertical-align: -5px; line-height: 0; padding-left: 1px; }
.col { padding-top: 3px; display: flex; flex-direction: column; margin-left: 5px; }
.p-styles .col { margin-left: 3px; }
.row { height: 31px; display: flex; align-items: center; gap: 6px; white-space: nowrap; letter-spacing: -0.16px; }
.row > span { margin-top: -1px; }
.p-update .row { letter-spacing: 0; }
.c-insert { width: 119px; }
.p-insert .col + .col { margin-left: 0; }
.inset { padding-left: 4px; letter-spacing: -0.22px; }
.pick { width: 125px; height: 28px; margin-top: 1px; border: 1px solid #c9c9c9; background: #f9f9f9; box-shadow: inset 0 0 0 1px #e6e6e6; display: flex; align-items: center; gap: 3px; padding-left: 2px; letter-spacing: -0.2px; }
.caret.cc { margin-left: 6px; border-top-color: #777; }
.c-author { width: 177px; margin-left: 1px; }
.c-author > .row { padding-left: 4px; }
.c-author > .row:last-child { padding: 0; }
.scope { width: 159px; height: 27px; margin-top: -2px; border: 1px solid #1a66b8; background: linear-gradient(#c3ddf6, #a9cdf0); display: flex; align-items: center; gap: 6px; padding-left: 3px; letter-spacing: -0.1px; }
.p-author .col:last-child { margin-left: 0; padding-top: 0; }
.boxes { padding-top: 4px; display: flex; flex-direction: column; gap: 4px; }
.box { width: 29px; height: 27px; border: 1px solid #cfcfcf; background: #f8f8f8; box-shadow: inset 0 0 0 1px #ececec; display: flex; align-items: center; justify-content: center; }
.split { display: flex; }
.drop { width: 15px; border-left: 0; }
.drop .caret { border-width: 4px 3px 0; }

.work { height: 620px; display: flex; }
.browser { width: 241px; background: #fff; font-family: "DejaVu Sans Condensed", "DejaVu Sans", sans-serif; font-stretch: condensed; font-size: 12.5px; letter-spacing: -0.1px; word-spacing: 0.8px; color: #000; }
.bhead { height: 24px; background: #606060; display: flex; align-items: center; padding-right: 6px; }
.bhead > svg { margin-left: 5px; }
.bhead > svg:last-child { margin-left: 9px; }
.btab { width: 64px; height: 24px; background: #fff; color: #444; display: flex; align-items: center; gap: 9px; padding-left: 4px; letter-spacing: 0; }
.root { height: 25px; margin-top: 1px; padding-left: 4px; display: flex; align-items: center; gap: 4px; letter-spacing: 0.08px; }
.tree { list-style: none; margin: 0; padding: 0 0 0 24px; }
.tree li { position: relative; height: 25px; display: flex; align-items: center; gap: 4px; }
.tree li:nth-child(-n+3) { letter-spacing: 0.1px; }
.tree li::before { content: ""; position: absolute; left: -13px; top: 0; width: 11px; height: 25px; border-left: 1px dotted #777; background: linear-gradient(90deg, #777 50%, transparent 50%) 0 13px / 2px 1px repeat-x; }
.tree li.kids::before { width: 12px; background-position: 8px 13px; background-repeat: no-repeat; background-size: 2px 1px; }
.tree li.last::before { height: 13px; border-bottom: 1px dotted #777; background: none; }
.tree li.kids::after { content: ""; position: absolute; left: -18px; top: 9px; width: 7px; height: 7px; border: solid #909090; border-width: 2px 2px 0 0; transform: rotate(45deg); background: #fff; }

.viewport { position: relative; width: 1529px; border-left: 4px solid #555; overflow: hidden; background: linear-gradient(180deg, rgba(176,180,190,0) 62%, rgba(176,180,190,.72) 100%), radial-gradient(ellipse 850px 1060px at 55% 66%, #9ba4b9 0, #8b96ae 35%, #626d82 70%, #384152 100%); }
.scene { position: absolute; left: 0; top: 0; }
.cube-text { font: bold 10px "Open Sans", sans-serif; fill: #5d626c; letter-spacing: 0; }
.mdi { position: absolute; right: -1px; top: 6px; }
.navbar { position: absolute; right: 1px; top: 146px; width: 33px; height: 197px; border-radius: 4px; background: #747882; border: 1px solid #858992; box-shadow: 0 0 0 2px #3c4350; }
.navbar svg { margin-top: -1px; }

.dialog { position: absolute; left: 287px; top: 79px; width: 706px; height: 512px; border: 1px solid #14181f; border-radius: 7px; padding: 0 7px 7px 6px; box-shadow: inset 0 0 0 1px #dce6f0, 0 2px 14px 3px rgba(10,14,24,.75); background: linear-gradient(180deg, transparent 150px, #7293b5 150px), linear-gradient(180deg, transparent 36px, rgba(225,232,241,.8) 150px), linear-gradient(100deg, #a2b1c4 0, #8398b2 12%, #7890b0 31%, #6582a4 34%, #6885a7 60%, #7894b5 76%, #a5b6cd 88%, #aabdd2 100%); }
.dbar { height: 34px; display: flex; align-items: center; padding-left: 2px; }
.dbar > svg { margin-top: -2px; }
.dtitle { flex: 1; margin-left: 5px; margin-top: -1px; font-size: 15px; color: #000; letter-spacing: -0.45px; text-shadow: 0 0 8px #e6edf5, 0 0 8px #e6edf5, 0 0 12px #e6edf5, 0 0 14px #e6edf5, 0 0 16px #e6edf5; }
.dclose { align-self: flex-start; width: 60px; height: 24px; border: 1px solid #4b1a18; border-top: 0; border-radius: 0 0 5px 5px; background: linear-gradient(#dfa299 0, #cf7f76 48%, #b93325 50%, #c9533c 75%, #de8a6c 100%); box-shadow: 0 0 0 1px #e6d8dc; display: flex; align-items: center; justify-content: center; }
.client { height: 470px; border: 1px solid #3c4a5c; box-shadow: 0 0 0 1px #c8d6e4; background: #f0f0f0; padding: 25px 15px 11px; display: flex; flex-direction: column; font-family: "DejaVu Sans Condensed", "DejaVu Sans", sans-serif; font-stretch: condensed; font-size: 12.5px; letter-spacing: -0.05px; word-spacing: 0.8px; color: #000; }
.form { padding-left: 25px; flex: 1; }
.form label { display: block; height: 16px; line-height: 16px; }
.form .second { margin-top: 14px; }
.select { margin-top: 11px; width: 484px; height: 25px; border: 1px solid #707070; border-radius: 3px; box-shadow: inset 0 0 0 1px #fafafa; background: linear-gradient(#f2f2f2 0, #e8e8e8 48%, #dcdcdc 50%, #cfcfcf 100%); display: flex; align-items: center; justify-content: space-between; padding: 0 5px 0 3px; }
.form .second + .select { margin-top: 9px; }
.foot { border-top: 1px solid #999; box-shadow: inset 0 1px #fff; height: 47px; padding: 18px 0 0 2px; display: flex; }
.btn { width: 98px; height: 27px; flex: none; line-height: 25px; text-align: center; border: 1px solid #707070; border-radius: 3px; box-shadow: inset 0 0 0 1px #fcfcfc; background: linear-gradient(#f2f2f2 0, #ebebeb 48%, #dddddd 50%, #cfcfcf 100%); }
.btn.help { width: 22px; display: flex; align-items: center; justify-content: center; }
.btn.off-btn { color: #8a8a8a; border-color: #adb2b5; background: #f4f4f4; }
.back { margin-left: 13px; }
.btn.next { margin-left: 5px; border-color: #3c7fb1; box-shadow: inset 0 0 0 1.5px #3cc8f0; background: linear-gradient(#f0f4f7 0, #e2eaf0 48%, #cfdce4 50%, #c3d2dc 100%); }
.pub { margin-left: 18px; }

.marks { position: absolute; left: 0; top: 0; pointer-events: none; }
```
